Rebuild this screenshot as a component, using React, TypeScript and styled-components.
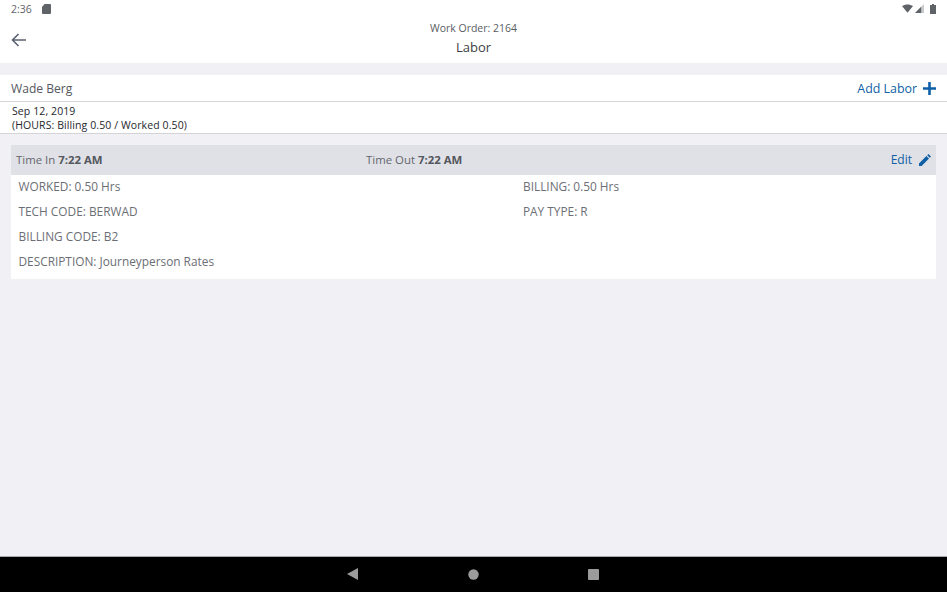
import * as React from "react";
import styled, { createGlobalStyle } from "styled-components";

const GlobalStyle = createGlobalStyle`
  html, body {
    margin: 0;
    padding: 0;
    height: 100%;
  }
  body {
    font-family: "Open Sans", "Liberation Sans", sans-serif;
    background: #f0f0f5;
  }
  #root {
    height: 100%;
  }
`;

const Screen = styled.div`
  width: 947px;
  height: 592px;
  display: flex;
  flex-direction: column;
  overflow: hidden;
  background: #f0f0f5;
`;

const TopArea = styled.header`
  height: 63px;
  flex: none;
  background: #fff;
  display: flex;
  flex-direction: column;
`;

const StatusBar = styled.div`
  height: 17px;
  padding: 0 11px;
  display: flex;
  align-items: center;
  justify-content: space-between;
  color: #5f6368;
  font-size: 10.5px;
`;

const StatusLeft = styled.div`
  display: flex;
  align-items: center;
  gap: 10px;
`;

const StatusRight = styled.div`
  display: flex;
  align-items: center;
  gap: 2px;
`;

const BatteryIcon = styled.svg`
  margin-left: 4px;
`;

const TitleBar = styled.div`
  position: relative;
  display: flex;
  flex-direction: column;
  align-items: center;
  padding-top: 3px;
`;

const BackButton = styled.div`
  position: absolute;
  left: 11px;
  top: 16px;
  display: flex;
`;

const WorkOrder = styled.div`
  font-size: 10.5px;
  line-height: 16px;
  color: #5a5d63;
`;

const PageTitle = styled.div`
  font-size: 13px;
  line-height: 18px;
  margin-top: 2px;
  font-weight: 500;
  color: #3c3f44;
`;

const NameRow = styled.div`
  margin-top: 12px;
  height: 26px;
  flex: none;
  background: #fff;
  border-bottom: 1px solid #d4d4d8;
  padding: 0 11px;
  display: flex;
  align-items: center;
  justify-content: space-between;
`;

const PersonName = styled.div`
  font-size: 12.1px;
  color: #55585e;
`;

const ActionLink = styled.div<{ $gap?: number; $size?: number }>`
  display: flex;
  align-items: center;
  gap: ${({ $gap }) => $gap ?? 6}px;
  font-size: ${({ $size }) => $size ?? 12.4}px;
  color: #0f5fa6;
`;

const DateBlock = styled.div`
  flex: none;
  height: 29px;
  background: #fff;
  border-bottom: 1px solid #d4d4d8;
  padding: 2px 12px 0;
  font-size: 10.5px;
  letter-spacing: 0.1px;
  line-height: 14px;
  color: #26282c;
`;

const Card = styled.section`
  margin: 11px 11px 0;
  background: #fff;
`;

const CardHeader = styled.div`
  height: 30px;
  box-sizing: border-box;
  background: #e0e1e7;
  padding: 0 5px 1px;
  display: grid;
  grid-template-columns: 350px 1fr auto;
  align-items: center;
  font-size: 11.4px;
  color: #63666c;
`;

const TimeValue = styled.b`
  font-weight: 700;
  color: #54575d;
`;

const CardBody = styled.div`
  padding: 0 8px 4px 7.5px;
  display: grid;
  grid-template-columns: 504.5px 1fr;
  grid-auto-rows: 25px;
  font-size: 11.85px;
  line-height: 23px;
  color: #6b6e74;
`;

const Spacer = styled.div`
  flex: 1;
`;

const NavBar = styled.nav`
  height: 36px;
  flex: none;
  background: #000;
  border-top: 1px solid #a9a9ad;
  box-sizing: border-box;
  padding-bottom: 1px;
  display: grid;
  grid-template-columns: repeat(3, 120px);
  justify-content: center;
  justify-items: center;
  align-items: center;
`;

const App: React.FC = () => (
  <Screen>
    <GlobalStyle />
    <TopArea>
      <StatusBar>
        <StatusLeft>
          2:36
          <svg width="9" height="10" viewBox="0 0 9 10">
            <path d="M2.5 0H8a1 1 0 0 1 1 1v8a1 1 0 0 1-1 1H1a1 1 0 0 1-1-1V3z" fill="#5f6368" />
          </svg>
        </StatusLeft>
        <StatusRight>
          <svg width="11" height="9" viewBox="0 0 12 9">
            <path d="M0 1.8C3.4-.6 8.6-.6 12 1.8L6 9z" fill="#5f6368" />
          </svg>
          <svg width="9" height="9" viewBox="0 0 9 9">
            <path d="M9 0v9H0z" fill="#c9cacc" />
            <path d="M6.2 2.8V9H0z" fill="#5f6368" />
          </svg>
          <BatteryIcon width="6" height="10" viewBox="0 0 6 10">
            <path d="M2 0h2v1h2v9H0V1h2z" fill="#5f6368" />
          </BatteryIcon>
        </StatusRight>
      </StatusBar>
      <TitleBar>
        <BackButton>
          <svg width="15" height="14" viewBox="0 0 15 14" fill="none" stroke="#5b6270" strokeWidth="1.6">
            <path d="M15 7H1.5M7.5 1 1.5 7l6 6" />
          </svg>
        </BackButton>
        <WorkOrder>Work Order: 2164</WorkOrder>
        <PageTitle>Labor</PageTitle>
      </TitleBar>
    </TopArea>

    <NameRow>
      <PersonName>Wade Berg</PersonName>
      <ActionLink>
        Add Labor
        <svg width="13" height="13" viewBox="0 0 14 14">
          <path d="M5.6 0h2.8v5.6H14v2.8H8.4V14H5.6V8.4H0V5.6h5.6z" fill="#0f5fa6" />
        </svg>
      </ActionLink>
    </NameRow>
    <DateBlock>
      Sep 12, 2019
      <br />
      (HOURS: Billing 0.50 / Worked 0.50)
    </DateBlock>

    <Card>
      <CardHeader>
        <div>
          Time In <TimeValue>7:22 AM</TimeValue>
        </div>
        <div>
          Time Out <TimeValue>7:22 AM</TimeValue>
        </div>
        <ActionLink $gap={7} $size={12}>
          Edit
          <svg width="12" height="12" viewBox="0 0 12 12">
            <path d="M0 12V9.4L7.4 2 10 4.6 2.6 12zM8.2 1.2 9.4 0 12 2.6 10.8 3.8z" fill="#0f5fa6" />
          </svg>
        </ActionLink>
      </CardHeader>
      <CardBody>
        <div>WORKED: 0.50 Hrs</div>
        <div>BILLING: 0.50 Hrs</div>
        <div>TECH CODE: BERWAD</div>
        <div>PAY TYPE: R</div>
        <div>BILLING CODE: B2</div>
        <div />
        <div>DESCRIPTION: Journeyperson Rates</div>
        <div />
      </CardBody>
    </Card>

    <Spacer />

    <NavBar>
      <svg width="13" height="12" viewBox="0 0 13 12">
        <path d="M11 0v12L0 6z" fill="#9b9b9b" />
      </svg>
      <svg width="11" height="11" viewBox="0 0 11 11">
        <circle cx="5.5" cy="5.5" r="5.2" fill="#9b9b9b" />
      </svg>
      <svg width="11" height="11" viewBox="0 0 11 11">
        <rect width="11" height="11" rx="1" fill="#9b9b9b" />
      </svg>
    </NavBar>
  </Screen>
);

export default App;
